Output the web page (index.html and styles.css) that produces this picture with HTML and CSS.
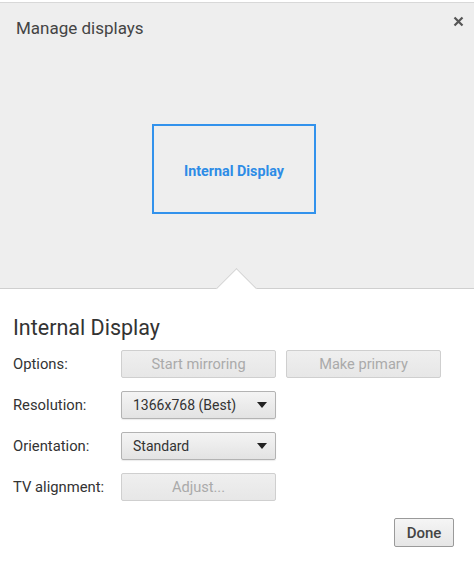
FILE: index.html
```html
<!DOCTYPE html>
<html>
<head>
<meta charset="utf-8">
<link rel="stylesheet" href="styles.css">
</head>
<body>
<div class="dialog">
  <div class="top">
    <div class="title-row">
      <div class="title">Manage displays</div>
      <svg class="close" width="11" height="11" viewBox="0 0 11 11"><path d="M1.5 1.5L9.5 9.5M9.5 1.5L1.5 9.5" stroke="#555" stroke-width="2.2" fill="none"/></svg>
    </div>
    <div class="display-box">Internal Display</div>
    <div class="notch"></div>
  </div>
  <div class="body">
    <div class="heading">Internal Display</div>
    <div class="row">
      <div class="label">Options:</div>
      <div class="btn disabled">Start mirroring</div>
      <div class="btn disabled">Make primary</div>
    </div>
    <div class="row">
      <div class="label">Resolution:</div>
      <div class="select"><span>1366x768 (Best)</span><span class="arrow"></span></div>
    </div>
    <div class="row">
      <div class="label">Orientation:</div>
      <div class="select"><span>Standard</span><span class="arrow"></span></div>
    </div>
    <div class="row">
      <div class="label">TV alignment:</div>
      <div class="btn disabled">Adjust...</div>
    </div>
    <div class="footer">
      <div class="done">Done</div>
    </div>
  </div>
</div>
</body>
</html>
```
FILE: styles.css
```css
html, body {
  margin: 0;
  padding: 0;
  background: #fff;
}
body {
  font-family: Roboto, "Noto Sans", sans-serif;
  width: 474px;
  height: 563px;
  overflow: hidden;
}
.dialog {
  padding-top: 2px;
}
.top {
  position: relative;
  background: #eeeeee;
  border-top: 1px solid #d8d8d8;
  border-bottom: 1px solid #cfcfcf;
  height: 285px;
}
.title-row {
  display: flex;
  justify-content: space-between;
  padding: 15px 10px 0 16px;
}
.title {
  font-size: 17px;
  line-height: 20px;
  color: #444;
}
.close {
  margin-top: -2px;
}
.display-box {
  margin: 86px 0 0 152px;
  width: 160px;
  box-sizing: content-box;
  border: 2px solid #3292ec;
  display: flex;
  align-items: center;
  justify-content: center;
  padding-top: 3px;
  height: 83px;
  font-size: 14.3px;
  font-weight: bold;
  color: #2d8ce6;
}
.notch {
  position: absolute;
  left: 222px;
  bottom: -15px;
  width: 28px;
  height: 28px;
  background: #fff;
  border-left: 1px solid #d4d4d4;
  border-top: 1px solid #d4d4d4;
  transform: rotate(45deg);
}
.body {
  padding: 27px 20px 0 13px;
}
.heading {
  font-size: 21.5px;
  line-height: 24px;
  color: #333;
  margin-bottom: 10px;
}
.row {
  display: flex;
  align-items: center;
  gap: 10px;
  height: 28px;
  margin-bottom: 13px;
}
.label {
  width: 98px;
  font-size: 14.8px;
  color: #333;
  white-space: nowrap;
}
.btn {
  box-sizing: border-box;
  width: 155px;
  height: 28px;
  border: 1px solid #cfcfcf;
  border-radius: 2px;
  background: linear-gradient(#efefef, #e7e7e7);
  display: flex;
  align-items: center;
  justify-content: center;
  font-size: 14.6px;
}
.btn.disabled {
  color: #aaa;
}
.select {
  box-sizing: border-box;
  width: 155px;
  height: 28px;
  border: 1px solid #b3b3b3;
  border-radius: 2px;
  background: linear-gradient(#f4f4f4, #e3e3e3);
  box-shadow: 0 1px 1px rgba(0,0,0,0.08);
  display: flex;
  align-items: center;
  justify-content: space-between;
  padding: 0 8px 0 11px;
  font-size: 14px;
  color: #333;
}
.arrow {
  width: 0;
  height: 0;
  border-left: 5px solid transparent;
  border-right: 5px solid transparent;
  border-top: 6px solid #222;
}
.footer {
  display: flex;
  justify-content: flex-end;
  margin-top: 17px;
}
.done {
  box-sizing: border-box;
  width: 60px;
  height: 29px;
  border: 1px solid #9a9a9a;
  border-radius: 2px;
  background: linear-gradient(#f5f5f5, #e6e6e6);
  display: flex;
  align-items: center;
  justify-content: center;
  font-size: 15px;
  font-weight: 500;
  color: #444;
}
```
